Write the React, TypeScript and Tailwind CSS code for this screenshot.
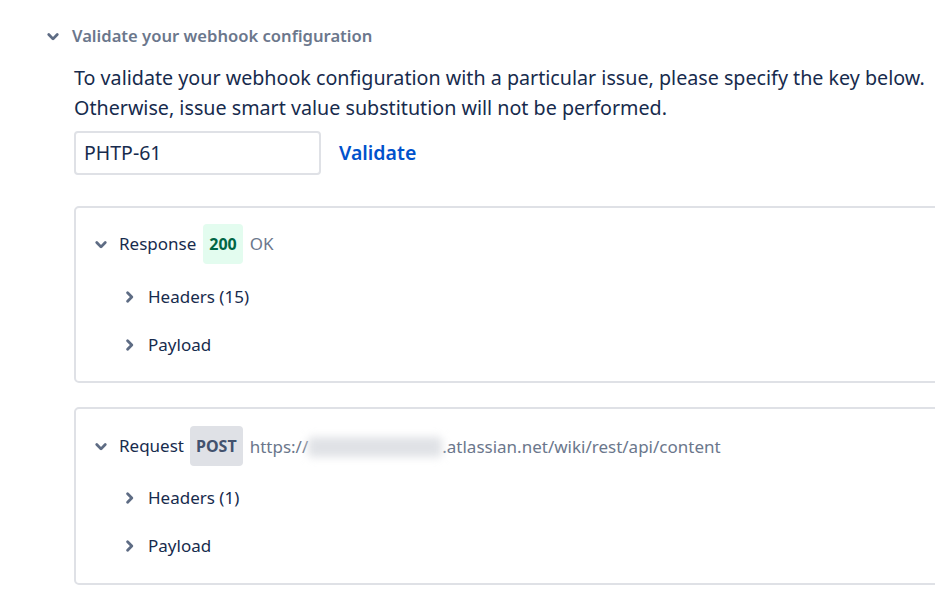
import React from "react";

const font = { fontFamily: '"Segoe UI", "Noto Sans", sans-serif' };

function ChevronDown({ className = "" }: { className?: string }) {
  return (
    <svg viewBox="0 0 24 24" className={className} fill="currentColor">
      <path d="M8.292 10.293a1.009 1.009 0 0 0 0 1.419l2.939 2.965c.218.215.5.322.779.322s.556-.107.769-.322l2.93-2.955a1.01 1.01 0 0 0 0-1.419.987.987 0 0 0-1.406 0l-2.298 2.317-2.307-2.327a.99.99 0 0 0-1.406 0z" />
    </svg>
  );
}

function ChevronRight({ className = "" }: { className?: string }) {
  return (
    <svg viewBox="0 0 24 24" className={className} fill="currentColor">
      <path d="M10.294 9.698a.988.988 0 0 1 0-1.407 1.01 1.01 0 0 1 1.419.001l2.965 2.94a1.09 1.09 0 0 1 0 1.548l-2.955 2.93a1.01 1.01 0 0 1-1.42.002.988.988 0 0 1-.001-1.406l2.318-2.297-2.326-2.31z" />
    </svg>
  );
}

function SubRow({ label }: { label: string }) {
  return (
    <div className="flex h-12 items-center pl-[36px]">
      <ChevronRight className="h-[34px] w-[34px] text-[#5e6c84]" />
      <span className="ml-[2px] text-[17px] text-[#172b4d]">{label}</span>
    </div>
  );
}

export default function App() {
  return (
    <div className="h-[614px] w-[935px] overflow-hidden bg-white" style={font}>
      <div className="mt-[12px] flex h-[48px] items-center pl-[36px]">
        <ChevronDown className="h-[34px] w-[34px] text-[#5e6c84]" />
        <span className="ml-[2px] text-[16.6px] font-semibold text-[#6b778c]">
          Validate your webhook configuration
        </span>
      </div>

      <div className="mt-[3px] pl-[74px]">
        <p className="whitespace-nowrap text-[19.7px] leading-[30px] text-[#172b4d]">
          To validate your webhook configuration with a particular issue, please specify the key below.
          <br />
          Otherwise, issue smart value substitution will not be performed.
        </p>

        <div className="mt-[8px] flex items-center">
          <div className="flex h-[44px] w-[247px] items-center rounded-[4px] border-2 border-[#dfe1e6] px-[8px] text-[19.5px] text-[#172b4d]">
            PHTP-61
          </div>
          <button className="ml-[18px] text-[19.5px] font-semibold text-[#0052cc]">Validate</button>
        </div>

        <div className="mt-[31px] w-[880px] rounded-[5px] border-2 border-[#dfe1e6] pb-[12px] pt-[16px]">
          <div className="flex h-[40px] items-center pl-[8px]">
            <ChevronDown className="h-[34px] w-[34px] text-[#5e6c84]" />
            <span className="ml-[1px] text-[17px] text-[#172b4d]">Response</span>
            <span className="ml-[7px] flex h-[40px] items-center rounded-[4px] bg-[#e3fcef] px-[6px] text-[16px] font-bold text-[#006644]">
              200
            </span>
            <span className="ml-[7px] text-[17px] text-[#6b778c]">OK</span>
          </div>
          <div className="mt-[9px]">
            <SubRow label="Headers (15)" />
            <SubRow label="Payload" />
          </div>
        </div>

        <div className="mt-[24px] w-[880px] rounded-[5px] border-2 border-[#dfe1e6] pb-[13px] pt-[17px]">
          <div className="flex h-[40px] items-center pl-[8px]">
            <ChevronDown className="h-[34px] w-[34px] text-[#5e6c84]" />
            <span className="ml-[1px] text-[17px] text-[#172b4d]">Request</span>
            <span className="ml-[6px] flex h-[40px] items-center rounded-[4px] bg-[#dfe1e6] px-[6px] text-[16px] font-bold text-[#42526e]">
              POST
            </span>
            <span className="ml-[7px] text-[17px] text-[#6b778c]">
              https://
              <span className="inline-block h-[20px] w-[134px] translate-y-[4px] rounded-sm bg-[#e0e2e6] blur-[4px]" />
              .atlassian.net/wiki/rest/api/content
            </span>
          </div>
          <div className="mt-[8px]">
            <SubRow label="Headers (1)" />
            <SubRow label="Payload" />
          </div>
        </div>
      </div>
    </div>
  );
}
